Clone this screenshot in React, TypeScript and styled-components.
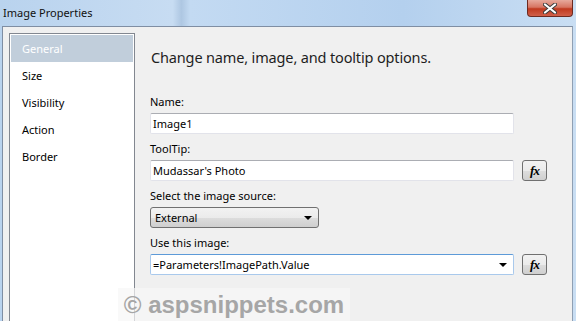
import React from "react";
import styled, { createGlobalStyle } from "styled-components";

const Global = createGlobalStyle`
  html, body { margin: 0; padding: 0; background: #f0f0f0; }
  body { font-family: "Noto Sans", "Open Sans", sans-serif; }
`;

const Window = styled.div`
  position: relative;
  width: 576px;
  height: 321px;
  overflow: hidden;
  display: flex;
  flex-direction: column;
  background: linear-gradient(90deg, #b9d3ee 0%, #c7dcf2 30%, #aec7e2 31.5%, #c3daf2 33%, #b4d0ee 70%, #c9def3 100%);
`;

const TitleBar = styled.div`
  height: 26px;
  flex: none;
  display: flex;
  align-items: flex-start;
  justify-content: space-between;
`;

const Title = styled.span`
  font-size: 11px;
  line-height: 15px;
  margin: 5px 0 0 3px;
  color: #111;
`;

const CloseButton = styled.div`
  width: 46px;
  height: 17px;
  margin-right: 3px;
  box-sizing: border-box;
  border: 1px solid #6d2a20;
  border-top: none;
  border-radius: 0 0 4px 4px;
  background: linear-gradient(180deg, #e7a99c 0%, #d77562 45%, #c0391f 55%, #d0604a 100%);
  display: flex;
  align-items: center;
  justify-content: center;
`;

const Frame = styled.div`
  flex: 1;
  display: flex;
  padding: 0 3px 0 2px;
  min-height: 0;
`;

const Body = styled.div`
  flex: 1;
  display: flex;
  background: #f0f0f0;
  border-top: 1px solid #7f8ea3;
  border-left: 1px solid #7f8ea3;
  border-right: 1px solid #8f9fb3;
  padding: 6px 0 0 6px;
  gap: 15px;
  min-height: 0;
`;

const NavList = styled.ul`
  width: 122px;
  margin: 0;
  padding: 1px;
  list-style: none;
  background: #fff;
  border: 1px solid #828790;
  border-bottom: none;
`;

const NavItem = styled.li<{ $active?: boolean }>`
  height: 27px;
  display: flex;
  align-items: center;
  padding-left: 11px;
  font-size: 11px;
  color: ${(p) => (p.$active ? "#fff" : "#000")};
  background: ${(p) => (p.$active ? "#c1cedb" : "transparent")};
`;

const Content = styled.div`
  flex: 1;
  display: flex;
  flex-direction: column;
  padding-top: 14px;
`;

const Heading = styled.h1`
  margin: 0 0 27px 1px;
  font-size: 14.5px;
  line-height: 20px;
  letter-spacing: -0.15px;
  font-weight: normal;
  color: #1e1e1e;
`;

const Field = styled.div`
  display: flex;
  flex-direction: column;
  margin-bottom: 7px;
`;

const Label = styled.label`
  font-size: 11px;
  line-height: 15px;
  margin-bottom: 4px;
  color: #000;
`;

const Row = styled.div`
  display: flex;
  align-items: center;
  gap: 8px;
`;

const TextBox = styled.div<{ $focus?: boolean }>`
  width: 364px;
  height: 21px;
  box-sizing: border-box;
  background: #fff;
  border: 1px solid ${(p) => (p.$focus ? "#a9c9ec" : "#e2e3ea")};
  border-top-color: ${(p) => (p.$focus ? "#5d9ad8" : "#abadb3")};
  border-radius: 2px;
  display: flex;
  align-items: center;
  justify-content: space-between;
  padding: 0 6px 0 2px;
  font-size: 11px;
  color: #000;
`;

const Select = styled.div`
  width: 169px;
  height: 21px;
  box-sizing: border-box;
  border: 1px solid #707070;
  border-radius: 3px;
  background: linear-gradient(180deg, #f2f2f2 0%, #ebebeb 50%, #dddddd 51%, #cfcfcf 100%);
  display: flex;
  align-items: center;
  justify-content: space-between;
  padding: 0 6px 0 4px;
  font-size: 11px;
`;

const Arrow = styled.span`
  width: 0;
  height: 0;
  border-left: 4px solid transparent;
  border-right: 4px solid transparent;
  border-top: 4px solid #000;
`;

const FxButton = styled.div`
  width: 25px;
  height: 21px;
  box-sizing: border-box;
  border: 1px solid #707070;
  border-radius: 3px;
  background: linear-gradient(180deg, #f2f2f2 0%, #ebebeb 50%, #dddddd 51%, #cfcfcf 100%);
  display: flex;
  align-items: center;
  justify-content: center;
  font-family: "Liberation Serif", "DejaVu Serif", serif;
  font-style: italic;
  font-weight: bold;
  font-size: 13px;
  letter-spacing: -1px;
  color: #000;
`;

const Watermark = styled.div`
  position: absolute;
  left: 118px;
  top: 288px;
  width: 232px;
  height: 33px;
  background: rgba(246, 246, 246, 0.7);
  display: flex;
  align-items: center;
  justify-content: center;
  font-family: "Liberation Sans", Arial, sans-serif;
  font-weight: bold;
  font-size: 24px;
  color: #a6a6a6;
  white-space: nowrap;
`;

const items = ["General", "Size", "Visibility", "Action", "Border"];

export default function App() {
  return (
    <>
      <Global />
      <Window>
        <TitleBar>
          <Title>Image Properties</Title>
          <CloseButton>
            <svg width="14" height="11" viewBox="0 0 14 11">
              <path d="M2 1.5 L12 9.5 M12 1.5 L2 9.5" stroke="#3a3a3a" strokeWidth="4" strokeLinecap="round" />
              <path d="M2 1.5 L12 9.5 M12 1.5 L2 9.5" stroke="#fff" strokeWidth="2.2" strokeLinecap="round" />
            </svg>
          </CloseButton>
        </TitleBar>
        <Frame>
          <Body>
            <NavList>
              {items.map((it, i) => (
                <NavItem key={it} $active={i === 0}>
                  {it}
                </NavItem>
              ))}
            </NavList>
            <Content>
              <Heading>Change name, image, and tooltip options.</Heading>
              <Field>
                <Label>Name:</Label>
                <Row>
                  <TextBox>Image1</TextBox>
                </Row>
              </Field>
              <Field>
                <Label>ToolTip:</Label>
                <Row>
                  <TextBox>Mudassar's Photo</TextBox>
                  <FxButton>fx</FxButton>
                </Row>
              </Field>
              <Field>
                <Label>Select the image source:</Label>
                <Row>
                  <Select>
                    External
                    <Arrow />
                  </Select>
                </Row>
              </Field>
              <Field>
                <Label>Use this image:</Label>
                <Row>
                  <TextBox $focus>
                    =Parameters!ImagePath.Value
                    <Arrow />
                  </TextBox>
                  <FxButton>fx</FxButton>
                </Row>
              </Field>
            </Content>
          </Body>
        </Frame>
        <Watermark>© aspsnippets.com</Watermark>
      </Window>
    </>
  );
}
